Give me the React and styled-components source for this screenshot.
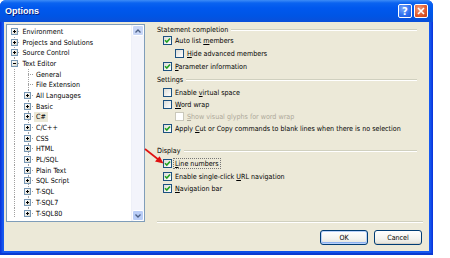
import React from "react";
import styled, { createGlobalStyle } from "styled-components";

const GlobalStyle = createGlobalStyle`
  html, body {
    margin: 0;
    padding: 0;
    background: #ffffff;
  }
  body {
    font-family: "DejaVu Sans Condensed", "DejaVu Sans", "Liberation Sans", sans-serif;
    font-stretch: condensed;
  }
`;

const Page = styled.div`
  width: 450px;
  height: 258px;
  overflow: hidden;
  position: relative;
`;

const Window = styled.div`
  width: 433px;
  height: 255px;
  box-sizing: border-box;
  padding: 0 4px 4px 4px;
  background: linear-gradient(to right, #0831d9, #1659f0 3px, #0a4ce6 50%, #1659f0 calc(100% - 3px), #0831d9);
  border-radius: 6px 6px 0 0;
  display: flex;
  flex-direction: column;
  box-shadow: inset 0 -2px 0 #0a3ad0;
`;

const TitleBar = styled.div`
  height: 22px;
  margin: 0 -4px;
  padding: 0 4px 0 5px;
  display: flex;
  align-items: center;
  justify-content: space-between;
  border-radius: 6px 6px 0 0;
  background: linear-gradient(
    to bottom,
    #3d8cf7 0px,
    #0a63f0 3px,
    #0058ee 8px,
    #0055e5 16px,
    #0a4fd9 22px
  );
`;

const Title = styled.span`
  color: #ffffff;
  font-family: "Liberation Sans", Arial, sans-serif;
  font-stretch: normal;
  font-weight: bold;
  font-size: 9px;
  text-shadow: 1px 1px 0 #0a1e80;
`;

const Controls = styled.div`
  display: flex;
  gap: 2px;
  margin-right: 1px;
`;

const CapButton = styled.div`
  width: 14px;
  height: 14px;
  box-sizing: border-box;
  border: 1px solid #ffffff;
  border-radius: 2px;
  display: flex;
  align-items: center;
  justify-content: center;
  color: #ffffff;
  font-family: "DejaVu Sans", sans-serif;
  font-stretch: normal;
  font-weight: bold;
  font-size: 10px;
  background: ${(p) =>
    p.$close
      ? "radial-gradient(circle at 35% 30%, #f29a7a, #e05a2d 60%, #c53d14)"
      : "radial-gradient(circle at 35% 30%, #7aa7f8, #2c6ff0 60%, #1d52d4)"};
`;

const Body = styled.div`
  flex: 1;
  background: #ece9d8;
  display: flex;
  padding: 2px 0 6px 2px;
`;

const Tree = styled.div`
  width: 139px;
  height: 198px;
  box-sizing: border-box;
  border: 1px solid #7f9db9;
  background: #ffffff;
  display: flex;
  overflow: hidden;
`;

const TreeList = styled.div`
  flex: 1;
  padding-top: 1px;
  display: flex;
  flex-direction: column;
`;

const Row = styled.div`
  height: 10.7px;
  display: flex;
  align-items: stretch;
  font-size: 7.1px;
  color: #000000;
`;

const Guide = styled.div`
  width: 13.5px;
  flex: none;
  background-image: repeating-linear-gradient(to bottom, #a0a0a0 0 1px, transparent 1px 2px);
  background-size: 1px 100%;
  background-position: 7px 0;
  background-repeat: no-repeat;
`;

const Connector = styled.div`
  width: 13.5px;
  flex: none;
  display: flex;
  align-items: center;
  justify-content: center;
  background-image: repeating-linear-gradient(to right, #a0a0a0 0 1px, transparent 1px 2px),
    ${(p) =>
      p.$vert
        ? "repeating-linear-gradient(to bottom, #a0a0a0 0 1px, transparent 1px 2px)"
        : "linear-gradient(transparent, transparent)"};
  background-size: 6px 1px, 1px ${(p) => (p.$vert === "half" ? "50%" : "100%")};
  background-position: 7px 50%, 7px 0;
  background-repeat: no-repeat;
`;

const Expander = styled.div`
  width: 7px;
  height: 7px;
  box-sizing: border-box;
  border: 1px solid #7898b5;
  background: linear-gradient(135deg, #ffffff, #d8d8cc);
  display: flex;
  align-items: center;
  justify-content: center;
  position: relative;
  margin-left: 1px;
  &::before {
    content: "";
    width: 3px;
    height: 1px;
    background: #000000;
  }
  &::after {
    content: "";
    display: ${(p) => (p.$open ? "none" : "block")};
    position: absolute;
    width: 1px;
    height: 3px;
    background: #000000;
  }
`;

const Label = styled.span`
  display: flex;
  align-items: center;
  padding: 0 2px;
  white-space: nowrap;
  background: ${(p) => (p.$selected ? "#ece9d8" : "transparent")};
`;

const ScrollBar = styled.div`
  width: 12px;
  flex: none;
  background: #f3f4fb;
  border-left: 1px solid #eef0f8;
  display: flex;
  flex-direction: column;
  justify-content: space-between;
`;

const ScrollArrow = styled.div`
  height: 11px;
  box-sizing: border-box;
  border: 1px solid #ffffff;
  border-radius: 2px;
  background: ${(p) => (p.$active ? "#b9cdf7" : "#c8d6f7")};
  display: flex;
  align-items: center;
  justify-content: center;
`;

const RightPane = styled.div`
  flex: 1;
  display: flex;
  flex-direction: column;
  padding: 0 6px 0 12px;
`;

const Groups = styled.div`
  flex: 1;
  display: flex;
  flex-direction: column;
`;

const GroupHead = styled.div`
  height: ${(p) => p.$h || 10}px;
  display: flex;
  align-items: center;
  font-size: 7.1px;
  color: #000000;
  margin-top: ${(p) => p.$top || 0}px;
  padding-right: 6px;
  &::after {
    content: "";
    flex: 1;
    height: 1px;
    background: #d0d0bf;
    margin-left: 3px;
    box-shadow: 0 1px 0 #ffffff;
  }
`;

const CheckRow = styled.label`
  height: ${(p) => p.$h || 12.5}px;
  display: flex;
  align-items: center;
  gap: 2px;
  padding-left: ${(p) => (p.$indent ? 18 : 6)}px;
  font-size: 7.1px;
  color: ${(p) => (p.$disabled ? "#aca899" : "#000000")};
  white-space: nowrap;
`;

const Box = styled.span`
  width: 9px;
  height: 9px;
  flex: none;
  box-sizing: border-box;
  border: 1px solid ${(p) => (p.$disabled ? "#cac8bb" : "#1c5180")};
  background: ${(p) =>
    p.$disabled ? "#ffffff" : "linear-gradient(135deg, #dcdcd7, #ffffff)"};
  display: flex;
  align-items: center;
  justify-content: center;
`;

const Text = styled.span`
  padding: 0 1px;
  outline: ${(p) => (p.$focus ? "1px dotted #777" : "none")};
  u {
    text-decoration: underline;
    text-underline-offset: 1px;
  }
`;

const Separator = styled.div`
  height: 1px;
  background: #d0d0bf;
  box-shadow: 0 1px 0 #ffffff;
`;

const ButtonRow = styled.div`
  display: flex;
  justify-content: flex-end;
  gap: 6px;
  padding-top: 8px;
  padding-right: 1px;
`;

const Button = styled.div`
  width: 48px;
  height: 15px;
  box-sizing: border-box;
  border: 1px solid #003c74;
  border-radius: 3px;
  background: linear-gradient(to bottom, #ffffff, #f3f3ef 60%, #e3e2d9);
  box-shadow: ${(p) =>
    p.$default ? "inset 0 0 0 1px #b9d1fa, inset 0 -1px 0 1px #8db2f0" : "inset 0 -1px 0 #d6d0c5"};
  display: flex;
  align-items: center;
  justify-content: center;
  font-size: 7.1px;
  color: #000000;
`;

const Arrow = styled.svg`
  position: absolute;
  left: 144px;
  top: 148px;
`;

const Check = () => (
  <svg width="7" height="7" viewBox="0 0 7 7">
    <path d="M1 3.2 L2.8 5 L6 1.5" stroke="#21a121" strokeWidth="1.6" fill="none" />
  </svg>
);

const CheckBox = ({ checked, disabled, indent, focus, h, children }) => (
  <CheckRow $indent={indent} $disabled={disabled} $h={h}>
    <Box $disabled={disabled}>{checked && <Check />}</Box>
    <Text $focus={focus}>{children}</Text>
  </CheckRow>
);

const treeItems = [
  { label: "Environment", level: 0, exp: "plus" },
  { label: "Projects and Solutions", level: 0, exp: "plus" },
  { label: "Source Control", level: 0, exp: "plus" },
  { label: "Text Editor", level: 0, exp: "minus" },
  { label: "General", level: 1 },
  { label: "File Extension", level: 1 },
  { label: "All Languages", level: 1, exp: "plus" },
  { label: "Basic", level: 1, exp: "plus" },
  { label: "C#", level: 1, exp: "plus", selected: true },
  { label: "C/C++", level: 1, exp: "plus" },
  { label: "CSS", level: 1, exp: "plus" },
  { label: "HTML", level: 1, exp: "plus" },
  { label: "PL/SQL", level: 1, exp: "plus" },
  { label: "Plain Text", level: 1, exp: "plus" },
  { label: "SQL Script", level: 1, exp: "plus" },
  { label: "T-SQL", level: 1, exp: "plus" },
  { label: "T-SQL7", level: 1, exp: "plus" },
  { label: "T-SQL80", level: 1, exp: "plus" },
];

const TreeRow = ({ item, index }) => {
  const top = item.level === 0;
  return (
    <Row>
      {top ? (
        <Connector $vert={index === 0 ? false : index === 3 ? "half" : true}>
          <Expander $open={item.exp === "minus"} />
        </Connector>
      ) : (
        <>
          <Guide />
          <Connector $vert>
            {item.exp && <Expander $open={item.exp === "minus"} />}
          </Connector>
        </>
      )}
      <Label $selected={item.selected}>{item.label}</Label>
    </Row>
  );
};

export default function App() {
  return (
    <Page>
      <GlobalStyle />
      <Window>
        <TitleBar>
          <Title>Options</Title>
          <Controls>
            <CapButton>?</CapButton>
            <CapButton $close>
              <svg width="8" height="8" viewBox="0 0 8 8">
                <path d="M1 1 L7 7 M7 1 L1 7" stroke="#fff" strokeWidth="1.6" />
              </svg>
            </CapButton>
          </Controls>
        </TitleBar>
        <Body>
          <Tree>
            <TreeList>
              {treeItems.map((item, i) => (
                <TreeRow key={item.label} item={item} index={i} />
              ))}
            </TreeList>
            <ScrollBar>
              <ScrollArrow>
                <svg width="6" height="4" viewBox="0 0 6 4">
                  <path d="M0.5 3.5 L3 1 L5.5 3.5" stroke="#4d6185" strokeWidth="1.3" fill="none" />
                </svg>
              </ScrollArrow>
              <ScrollArrow $active>
                <svg width="6" height="4" viewBox="0 0 6 4">
                  <path d="M0.5 0.5 L3 3 L5.5 0.5" stroke="#4d6185" strokeWidth="1.3" fill="none" />
                </svg>
              </ScrollArrow>
            </ScrollBar>
          </Tree>
          <RightPane>
            <Groups>
              <GroupHead $h={10}>Statement completion</GroupHead>
              <CheckBox checked h={12}>
                Auto list <u>m</u>embers
              </CheckBox>
              <CheckBox indent h={15}>
                <u>H</u>ide advanced members
              </CheckBox>
              <CheckBox checked h={11}>
                <u>P</u>arameter information
              </CheckBox>
              <GroupHead $h={14}>Settings</GroupHead>
              <CheckBox h={12}>
                Enable <u>v</u>irtual space
              </CheckBox>
              <CheckBox h={13}>
                <u>W</u>ord wrap
              </CheckBox>
              <CheckBox indent disabled h={10}>
                <u>S</u>how visual glyphs for word wrap
              </CheckBox>
              <CheckBox checked h={14}>
                Apply <u>C</u>ut or Copy commands to blank lines when there is no selection
              </CheckBox>
              <GroupHead $top={9} $h={12}>Display</GroupHead>
              <CheckBox checked focus h={14}>
                <u>L</u>ine numbers
              </CheckBox>
              <CheckBox checked h={12}>
                Enable single-click <u>U</u>RL navigation
              </CheckBox>
              <CheckBox checked h={12}>
                <u>N</u>avigation bar
              </CheckBox>
            </Groups>
            <Separator />
            <ButtonRow>
              <Button $default>OK</Button>
              <Button>Cancel</Button>
            </ButtonRow>
          </RightPane>
        </Body>
      </Window>
      <Arrow width="22" height="18" viewBox="0 0 22 18">
        <path d="M1 1 L15 12" stroke="#e01010" strokeWidth="1.6" />
        <path d="M19.5 15.5 L11 13.6 L15.6 8.2 Z" fill="#e01010" />
      </Arrow>
    </Page>
  );
}
